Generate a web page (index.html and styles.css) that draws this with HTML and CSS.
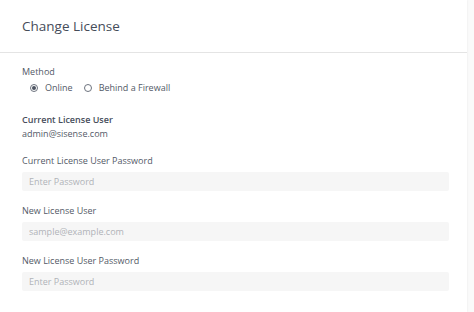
FILE: index.html
```html
<!DOCTYPE html>
<html lang="en">
<head>
<meta charset="UTF-8" />
<meta name="viewport" content="width=device-width, initial-scale=1" />
<title>Change License</title>
<link rel="stylesheet" href="styles.css">
</head>
<body>

  <div class="dialog">
    <div class="dialog-header">
      <h2>Change License</h2>
    </div>

    <div class="dialog-body">
      <!-- method -->
      <div class="field method">
        <div class="label">Method</div>
        <div class="radio-group">
          <label class="radio"><span class="dot checked"></span>Online</label>
          <label class="radio"><span class="dot"></span>Behind a Firewall</label>
        </div>
      </div>

      <!-- current user -->
      <div class="field">
        <div class="label strong">Current License User</div>
        <div class="value">admin@sisense.com</div>
      </div>

      <div class="field">
        <div class="label">Current License User Password</div>
        <input type="password" class="text-input" placeholder="Enter Password" />
      </div>

      <!-- new user -->
      <div class="field">
        <div class="label">New License User</div>
        <input type="text" class="text-input" placeholder="sample@example.com" />
      </div>

      <div class="field">
        <div class="label">New License User Password</div>
        <input type="password" class="text-input" placeholder="Enter Password" />
      </div>
    </div>
  </div>

</body>
</html>
```

FILE: styles.css
```css
body {
  font-family: 'Open Sans', sans-serif;
  background: #fafafa;
  margin: 0;
  color: #535a67;
}
.dialog {
  background: white;
  width: 467px;
  height: 312px;
  box-shadow: 0 0 2px rgba(0,0,0,0.08);
}
.dialog-header {
  height: 52px;
  border-bottom: 1px solid #e4e4e4;
  padding: 0 22px;
  display: flex;
  align-items: center;
}
h2 {
  margin: 0;
  font-size: 13.5px;
  font-weight: 400;
  color: #454c59;
}
.dialog-body {
  padding: 12px 18px 0 22px;
}
.field {
  margin-bottom: 13px;
}
.field.method {
  margin-bottom: 18px;
}
.label {
  font-size: 9px;
  line-height: 14px;
  margin-bottom: 4px;
}
.method .label {
  margin-bottom: 2px;
}
.label.strong {
  font-weight: 600;
  margin-bottom: 0;
  color: #474e5b;
}
.value {
  font-size: 9px;
  line-height: 14px;
}
.radio-group {
  display: flex;
  gap: 11px;
  padding-left: 8px;
}
.radio {
  display: flex;
  align-items: center;
  font-size: 9px;
  line-height: 14px;
}
.dot {
  width: 6px;
  height: 6px;
  border: 1px solid #6d737e;
  border-radius: 50%;
  margin-right: 7px;
  display: flex;
  align-items: center;
  justify-content: center;
}
.dot.checked::after {
  content: '';
  width: 4px;
  height: 4px;
  border-radius: 50%;
  background: #4c5361;
}
.text-input {
  display: block;
  width: 100%;
  height: 19px;
  box-sizing: border-box;
  border: none;
  border-radius: 2px;
  background: #f6f6f6;
  padding: 0 7px;
  font-family: inherit;
  font-size: 9px;
  color: #535a67;
  outline: none;
}
.text-input::placeholder {
  color: #b0b3b8;
}
```
